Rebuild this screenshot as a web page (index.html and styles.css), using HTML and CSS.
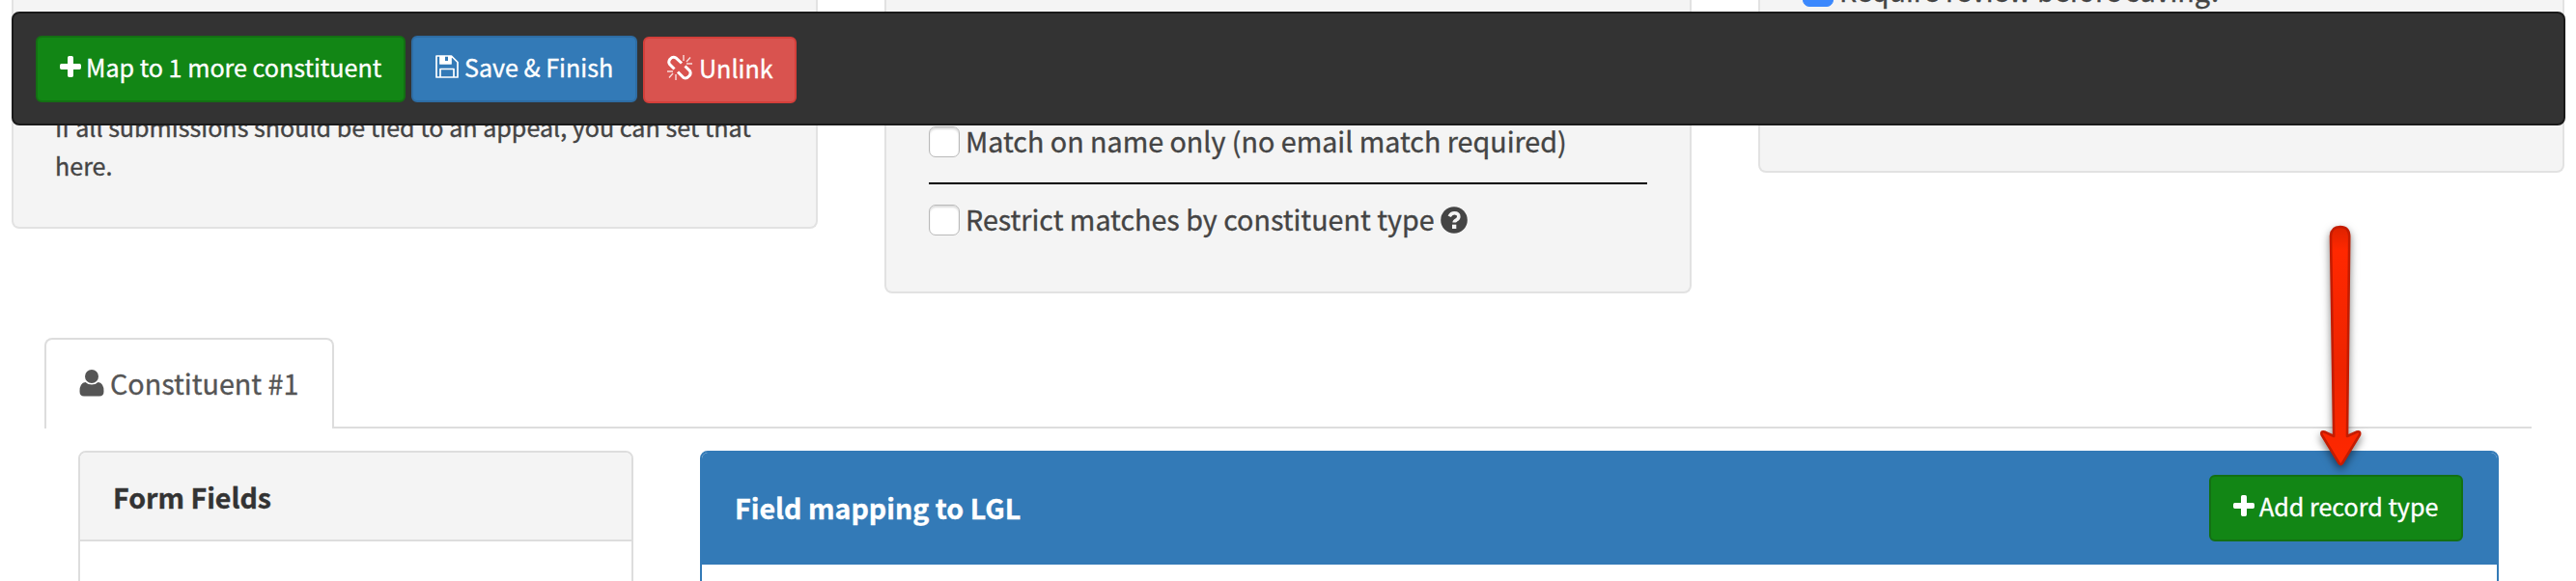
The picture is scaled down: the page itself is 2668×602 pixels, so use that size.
FILE: index.html
```html
<!DOCTYPE html>
<html lang="en">
<head>
<meta charset="utf-8">
<title>Form mapping</title>
<link rel="stylesheet" href="styles.css">
</head>
<body>
<svg class="sprite" aria-hidden="true">
  <symbol id="plus" viewBox="0 0 22 22"><path d="M9.700 0h2.600q1.700 0 1.700 1.700V8h6.300q1.700 0 1.700 1.700v2.600q0 1.700-1.700 1.700H14v6.300q0 1.700-1.700 1.700H9.700q-1.700 0-1.700-1.700V14H1.700q-1.700 0-1.700-1.700V9.700q0-1.700 1.700-1.700H8V1.700q0-1.700 1.700-1.700z"/></symbol>
</svg>
<main class="page">
  <section class="settings">
    <div class="well well-appeal"><p>If all submissions should be tied to an appeal, you can set that here.</p></div>
    <div class="well well-match">
      <label class="check"><span class="box"></span><span class="check-text">Match on name only (no email match required)</span></label>
      <hr>
      <label class="check"><span class="box"></span><span class="check-text">Restrict matches by constituent type</span>
        <svg class="help" viewBox="0 0 28 28"><circle cx="14" cy="14" r="13.800"/><path d="M9.200 10.300Q11 6.800 14.200 6.800q4.600 0 4.600 3.700 0 2-2.300 3.300-2.300 1.200-2.300 2.800" fill="none" stroke="#f4f4f4" stroke-width="3.600"/><rect x="12" y="18.700" width="4.300" height="4.300" fill="#f4f4f4"/></svg>
      </label>
    </div>
    <div class="well well-review">
      <label class="check"><span class="box box-on"></span><span class="check-text">Require review before saving?</span></label>
    </div>
  </section>

  <nav class="tabs">
    <a class="tab"><svg class="user" viewBox="0 0 26 28"><circle cx="13" cy="7" r="7"/><path d="M6.500 13Q9 15.600 13 15.600T19.500 13Q25.500 13.500 25.500 22.500 25.500 27.500 21 27.500H5Q.5 27.500.5 22.500.5 13.500 6.500 13z"/></svg><span>Constituent #1</span></a>
  </nav>

  <section class="mapping">
    <div class="panel panel-fields"><h3 class="panel-head">Form Fields</h3></div>
    <div class="panel panel-map">
      <div class="panel-head"><h3>Field mapping to LGL</h3>
        <button class="btn btn-green btn-add"><svg class="plus"><use href="#plus"/></svg><span>Add record type</span></button>
      </div>
    </div>
  </section>

  <div class="toolbar">
    <button class="btn btn-green btn-more"><svg class="plus"><use href="#plus"/></svg><span>Map to 1 more constituent</span></button>
    <button class="btn btn-blue btn-save"><svg class="disk" viewBox="0 0 24 24"><path d="M1 1h15.500L23 7.500V23H1zM5 1v8h11V1M5 23v-8.500h14V23" fill="none" stroke="#fff" stroke-width="1.700" stroke-linejoin="round"/><path d="M5 1h5v5h3V1h3v8H5z"/></svg><span>Save &amp; Finish</span></button>
    <button class="btn btn-red btn-unlink"><svg class="chain" viewBox="0 0 26 26"><path d="M7.500 14.500L2.500 9.500Q.8 7 3 4.200Q6 1 9 3L15 8.500M18.500 11.500L23.500 16.500Q25 19 23 21.500Q20 25 17 23.500L11 17.500" fill="none" stroke="#fff" stroke-width="3"/><path d="M17 0v6M20 7l4-4.500M20 9h6M0 17h6M6 19l-4 4.500M9 20v6" fill="none" stroke="#fff" stroke-width="1.400" opacity=".8"/></svg><span>Unlink</span></button>
  </div>

  <svg class="arrow" viewBox="0 0 60 270">
    <defs><linearGradient id="red" x1="0" x2="0" y1="0" y2="1"><stop offset="0" stop-color="#dd2200"/><stop offset=".1" stop-color="#ff2800"/><stop offset=".6" stop-color="#ee2400"/><stop offset="1" stop-color="#ff2800"/></linearGradient></defs>
    <path d="M20 14.500Q20.500 5 29.700 5T39.200 14.500L37 222L47 217.500Q51 216.500 50 220.500L32 250Q30.300 252.500 28.600 250L10.600 220.500Q9.500 216.500 13.500 217.500L23.200 222z" fill="url(#red)" stroke="#c41c00" stroke-width="2.600" stroke-linejoin="round"/>
  </svg>
</main>
</body>
</html>
```
FILE: styles.css
```css
* { box-sizing: border-box; }
body { margin: 0; background: #fff; color: #444; font-family: "Noto Sans CJK SC", "Noto Sans", sans-serif; -webkit-text-stroke: .35px currentColor; }
.sprite { position: absolute; width: 0; height: 0; }
.page { position: relative; width: 2668px; height: 602px; overflow: hidden; }
.settings { display: grid; grid-template-columns: 835px 836px 835px; column-gap: 69px; align-items: start; height: 350px; padding-left: 12px; }
.well { background: #f4f4f4; border: 2px solid #e2e2e2; border-top: 0; border-radius: 0 0 8px 8px; }
.well-appeal { height: 237px; padding: 111px 43px 0; }
.well-appeal p { margin: 0; width: 740px; font-size: 25.100px; line-height: 40px; }
.well-match { height: 304px; padding: 131px 44px 0; }
.well-review { height: 179px; padding: 0 44px; }
.well-review .check { margin-top: -25px; }
.check { display: flex; align-items: center; height: 32px; font-size: 28.660px; line-height: 32px; white-space: nowrap; }
.check-text { padding-bottom: 2px; }
.box { width: 32px; height: 32px; margin-right: 6px; border: 1px solid #b9b9b9; border-radius: 7px; background: #fff; box-shadow: inset 0 2px 2px #ddd; }
.box-on { background: #3b88fd; border-color: #3b88fd; box-shadow: none; }
.well-match hr { margin: 26px 0 21px; border: 0; height: 2px; background: #000; }
.help { width: 28px; height: 28px; margin-left: 6px; fill: #444; }
.tabs { margin-left: 46px; width: 2576px; height: 94px; display: flex; border-bottom: 2px solid #ddd; }
.tab { display: flex; align-items: center; width: 300px; height: 94px; padding: 0 0 2px 34px; border: 2px solid #ddd; border-bottom: 0; border-radius: 8px 8px 0 0; background: #fff; color: #555; font-size: 28.700px; line-height: 40px; white-space: nowrap; }
.user { width: 26px; height: 28px; margin-right: 6px; fill: #555; }
.mapping { display: flex; gap: 69px; padding: 23px 0 0 81px; }
.panel { border: 2px solid #ddd; border-radius: 8px; height: 170px; overflow: hidden; }
.panel-fields { width: 575px; }
.panel-fields .panel-head { height: 92px; padding-left: 34px; background: #f4f4f4; border-bottom: 2px solid #ddd; color: #333; font-size: 28.560px; line-height: 92px; }
.panel-map { width: 1863px; border-color: #337ab7; }
.panel-map .panel-head { display: flex; align-items: flex-start; justify-content: space-between; height: 116px; padding: 23px 35px 0 34px; background: #337ab7; color: #fff; }
h3 { margin: 0; font-size: 28.600px; line-height: 67px; }
.btn { display: flex; align-items: center; height: 69px; padding: 0 0 5px 23px; border: 2px solid #137013; border-radius: 6px; color: #fff; font: 25.100px/36px "Noto Sans CJK SC", "Noto Sans", sans-serif; white-space: nowrap; }
.btn svg { fill: #fff; flex: none; }
.btn-green { background: #128615; }
.btn-blue { background: #337ab7; border-color: #2e6da4; }
.btn-red { background: #d9534f; border-color: #d43f3a; margin-top: 1px; }
.btn-more { width: 383px; }
.btn-save { width: 234px; }
.btn-unlink { width: 159px; }
.btn-add { width: 263px; }
.plus { width: 22px; height: 22px; margin-right: 5px; }
.disk { width: 24px; height: 24px; margin-right: 6px; }
.chain { width: 26px; height: 26px; margin-right: 7px; }
.toolbar { position: absolute; left: 12px; top: 12px; width: 2645px; height: 118px; display: flex; align-items: flex-start; gap: 6px; padding: 23px; background: #333; border: 2px solid #1a1a1a; border-radius: 8px; }
.arrow { position: absolute; left: 2394px; top: 230px; width: 60px; height: 270px; filter: drop-shadow(0 4px 4px rgba(0,0,0,.5)); }
```
